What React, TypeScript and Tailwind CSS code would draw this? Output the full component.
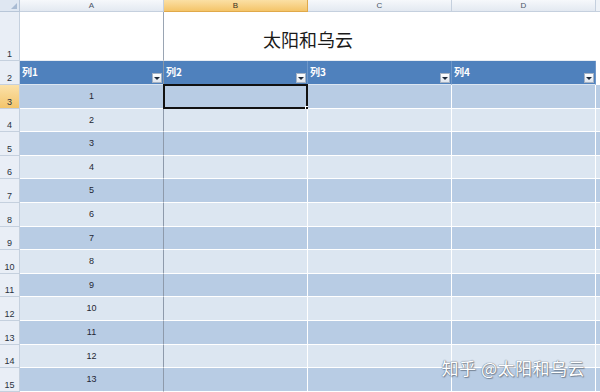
import React from "react";

const cols = ["A", "B", "C", "D"];
const rowHeights = [24, 23, 24, 23, 24, 24, 23, 24, 23, 24, 24, 23, 24];

function Dropdown() {
  return (
    <div className="absolute right-[1px] bottom-[1px] w-[10px] h-[10px] border border-[#a6b3c4] bg-gradient-to-b from-[#ffffff] to-[#dfe5ee] flex items-center justify-center">
      <div className="w-0 h-0 border-l-[3px] border-r-[3px] border-t-[3px] border-l-transparent border-r-transparent border-t-[#1e2a3a]" />
    </div>
  );
}

function RowHead({ n, h, active }: { n: number; h: number; active?: boolean }) {
  return (
    <div
      className={
        "w-[20px] shrink-0 border-r border-b border-[#c5d0de] flex items-end justify-center pb-[1px] text-[9px] leading-none text-[#2a3240] " +
        (active ? "bg-gradient-to-b from-[#fbe1a8] to-[#f3c56b]" : "bg-[#e9eef6]")
      }
      style={{ height: h }}
    >
      {n}
    </div>
  );
}

export default function App() {
  return (
    <div
      className="relative w-[600px] h-[392px] overflow-hidden bg-white select-none"
      style={{ fontFamily: '"Liberation Sans", "Noto Sans CJK SC", sans-serif' }}
    >
      {/* column headers */}
      <div className="flex h-[12px]">
        <div className="relative w-[20px] shrink-0 border-r border-b border-[#b8c6d8] bg-[#dfe7f2]">
          <div className="absolute right-[2px] bottom-[1px] w-0 h-0 border-l-[6px] border-t-[6px] border-l-transparent border-t-transparent border-b-0 border-r-0" />
          <div className="absolute right-[2px] bottom-[2px] w-0 h-0 border-b-[6px] border-l-[6px] border-l-transparent border-b-[#a9bbd3]" />
        </div>
        {cols.map((c) => (
          <div
            key={c}
            className={
              "w-[144px] shrink-0 border-r border-b flex items-center justify-center text-[8px] leading-none " +
              (c === "B"
                ? "bg-gradient-to-b from-[#fbe0a4] to-[#f4c468] border-[#e0a94a] text-[#3a3020]"
                : "bg-gradient-to-b from-[#f6f8fb] to-[#e3e9f1] border-[#c5d0de] text-[#4a5566]")
            }
          >
            {c}
          </div>
        ))}
        <div className="flex-1 border-b border-[#c5d0de] bg-[#eef2f7]" />
      </div>

      {/* row 1: title */}
      <div className="flex h-[49px]">
        <RowHead n={1} h={49} />
        <div className="w-[144px] shrink-0 border-r border-[#9aa5b3] border-b border-b-[#e8edf3]" />
        <div className="w-[288px] shrink-0 flex items-center justify-center pt-[7px] text-[18px] text-[#1a1a1a] border-b border-[#e8edf3]" style={{ fontFamily: '"Noto Sans CJK SC", sans-serif' }}>
          太阳和乌云
        </div>
        <div className="w-[144px] shrink-0 border-b border-[#e8edf3]" />
        <div className="flex-1" />
      </div>

      {/* row 2: table header */}
      <div className="flex h-[24px]">
        <RowHead n={2} h={24} />
        {[1, 2, 3, 4].map((i) => (
          <div
            key={i}
            className={
              "relative w-[144px] shrink-0 bg-[#4f81bd] border-b border-[#dbe5f1] pl-[2px] pt-[6px] text-[10px] leading-none font-bold text-white " +
              (i === 1 ? "border-r border-r-[#8897a8]" : "border-r border-r-[#6f97c8]")
            }
            style={{ fontFamily: '"Noto Sans CJK SC", sans-serif' }}
          >
            列{i}
            <Dropdown />
          </div>
        ))}
        <div className="flex-1" />
      </div>

      {/* data rows */}
      {rowHeights.map((h, i) => {
        const dark = i % 2 === 0;
        const bg = dark ? "bg-[#b8cce4]" : "bg-[#dce6f1]";
        return (
          <div key={i} className="flex" style={{ height: h }}>
            <RowHead n={i + 3} h={h} active={i === 0} />
            <div
              className={
                "w-[144px] shrink-0 border-r border-r-[#8e9aab] border-b border-b-white flex items-center justify-center text-[9px] leading-none text-[#1f2633] " +
                bg
              }
            >
              {i + 1}
            </div>
            {[0, 1, 2].map((j) => (
              <div
                key={j}
                className={
                  "relative w-[144px] shrink-0 border-r border-b border-white " + bg
                }
              >
                {i === 0 && j === 0 && (
                  <>
                    <div className="absolute -left-[1px] -top-[1px] -right-[1px] -bottom-[1px] border-2 border-[#111]" />
                    <div className="absolute -right-[3px] -bottom-[3px] w-[5px] h-[5px] bg-[#111] border border-white" />
                  </>
                )}
              </div>
            ))}
            <div className={"flex-1 border-b border-white " + bg} />
          </div>
        );
      })}

      {/* watermark */}
      <div
        className="absolute right-[15px] bottom-[16px] text-[17px] leading-none text-white tracking-[0.5px]"
        style={{
          fontFamily: '"Noto Sans CJK SC", sans-serif',
          textShadow: "0 0 1px #6b7788, 0 0 1px #6b7788, 1px 1px 1px rgba(80,90,105,0.6)",
        }}
      >
        知乎 @太阳和乌云
      </div>
    </div>
  );
}
